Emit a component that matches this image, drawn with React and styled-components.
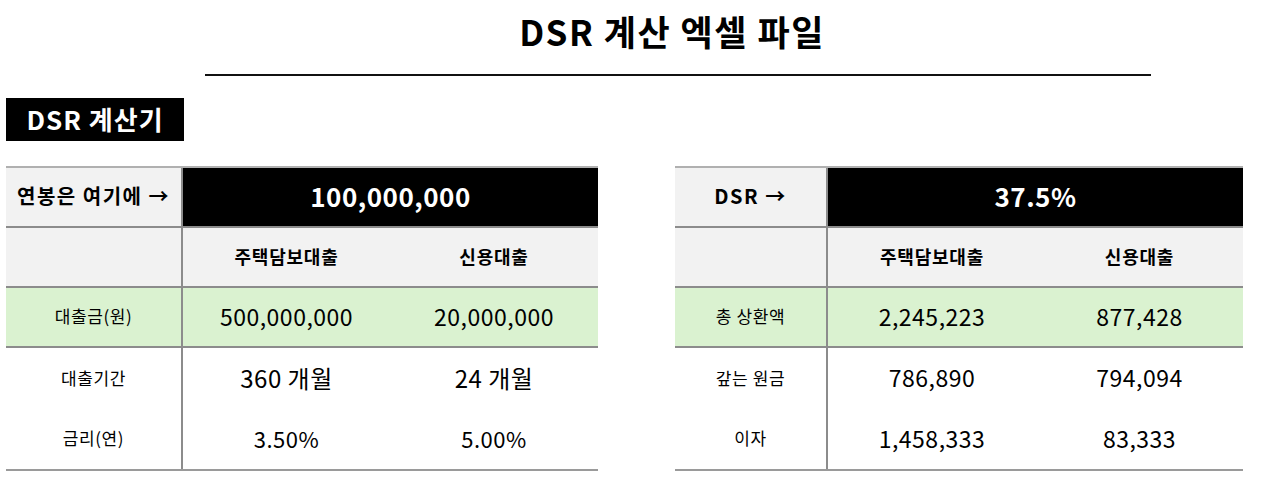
import React from "react";
import styled, { createGlobalStyle } from "styled-components";

const GlobalStyle = createGlobalStyle`
  html, body {
    margin: 0;
    padding: 0;
    background: #fff;
  }
  body {
    font-family: "Noto Sans CJK KR", "Noto Sans", sans-serif;
    color: #000;
  }
`;

const Page = styled.div`
  width: 1280px;
  height: 482px;
  overflow: hidden;
`;

const Header = styled.header`
  display: flex;
  flex-direction: column;
  align-items: center;
  padding-top: 9px;
`;

const Title = styled.h1`
  margin: 0 0 0 64px;
  font-size: 35px;
  font-weight: 700;
  line-height: 44px;
  letter-spacing: 1.5px;
`;

const Rule = styled.div`
  width: 946px;
  height: 2px;
  background: #111;
  margin: 21px 0 0 76px;
`;

const Badge = styled.div`
  display: inline-flex;
  align-items: center;
  justify-content: center;
  margin: 22px 0 0 6px;
  padding-bottom: 2px;
  width: 178px;
  height: 43px;
  box-sizing: border-box;
  background: #000;
  color: #fff;
  font-size: 26px;
  font-weight: 700;
  letter-spacing: 1px;
`;

const Tables = styled.div`
  display: flex;
  gap: 77px;
  margin: 25px 0 0 6px;
`;

const Table = styled.div`
  display: grid;
  grid-template-columns: ${(p) => p.$cols};
  border-top: 2px solid #b0b0b0;
  border-bottom: 2px solid #9a9a9a;
`;

const Cell = styled.div`
  height: ${(p) => p.$h || 60}px;
  display: flex;
  align-items: center;
  justify-content: center;
  padding-bottom: 3px;
  background: ${(p) => p.$bg || "#fff"};
  color: ${(p) => (p.$bg === "#000" ? "#fff" : "#000")};
  font-size: ${(p) => p.$size || 20}px;
  font-weight: ${(p) => p.$weight || 400};
  letter-spacing: ${(p) => p.$ls || 0.5}px;
  border-right: ${(p) => (p.$divider ? "2px solid #8c8c8c" : "none")};
  border-bottom: ${(p) => (p.$line ? "2px solid #8c8c8c" : "none")};
  grid-column: ${(p) => (p.$span ? `span ${p.$span}` : "auto")};
  box-sizing: border-box;
  white-space: nowrap;
`;

const HEAD_BG = "#f2f2f2";
const GREEN = "#daf2d0";

function Calculator({ cols, headLabel, headValue, rows }) {
  return (
    <Table $cols={cols}>
      <Cell $bg={HEAD_BG} $divider $line $size={20} $ls={1.5} $weight={700}>
        {headLabel}
      </Cell>
      <Cell $bg="#000" $span={2} $line $size={26} $ls={0} $weight={700}>
        {headValue}
      </Cell>

      <Cell $bg={HEAD_BG} $divider $line />
      <Cell $bg={HEAD_BG} $line $size={18} $ls={0.8} $weight={600}>
        주택담보대출
      </Cell>
      <Cell $bg={HEAD_BG} $line $size={18} $ls={0.8} $weight={600}>
        신용대출
      </Cell>

      {rows.map((r) => (
        <React.Fragment key={r.label}>
          <Cell $bg={r.bg} $divider $line={r.line} $size={17} $ls={0.6} $h={r.h}>
            {r.label}
          </Cell>
          <Cell $bg={r.bg} $line={r.line} $size={r.size} $h={r.h}>
            {r.a}
          </Cell>
          <Cell $bg={r.bg} $line={r.line} $size={r.size} $h={r.h}>
            {r.b}
          </Cell>
        </React.Fragment>
      ))}
    </Table>
  );
}

export default function App() {
  return (
    <Page>
      <GlobalStyle />
      <Header>
        <Title>DSR 계산 엑셀 파일</Title>
        <Rule />
      </Header>
      <Badge>DSR 계산기</Badge>
      <Tables>
        <Calculator
          cols="177px 207px 208px"
          headLabel="연봉은 여기에 →"
          headValue="100,000,000"
          rows={[
            { label: "대출금(원)", a: "500,000,000", b: "20,000,000", bg: GREEN, line: true, size: 23 },
            { label: "대출기간", a: "360 개월", b: "24 개월", size: 24, h: 61 },
            { label: "금리(연)", a: "3.50%", b: "5.00%", size: 22, h: 60 },
          ]}
        />
        <Calculator
          cols="153px 208px 207px"
          headLabel="DSR →"
          headValue="37.5%"
          rows={[
            { label: "총 상환액", a: "2,245,223", b: "877,428", bg: GREEN, line: true, size: 23 },
            { label: "갚는 원금", a: "786,890", b: "794,094", size: 23, h: 61 },
            { label: "이자", a: "1,458,333", b: "83,333", size: 23, h: 60 },
          ]}
        />
      </Tables>
    </Page>
  );
}
